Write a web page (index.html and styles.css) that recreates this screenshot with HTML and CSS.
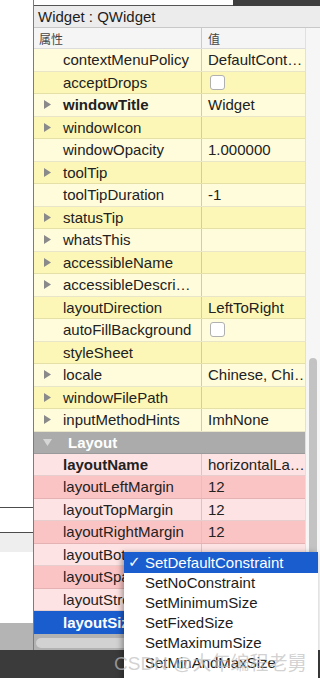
FILE: index.html
```html
<!DOCTYPE html>
<html lang="zh">

<head>
    <meta charset="UTF-8">
    <meta name="viewport" content="width=device-width, initial-scale=1.0">
    <title>Widget : QWidget</title>
    <link rel="stylesheet" href="styles.css">
</head>

<body>
    <div class="screen">
        <!-- left edge of the form editor -->
        <div class="side">
            <div class="side-top"></div>
            <div class="side-field"></div>
            <div class="side-band"></div>
            <div class="side-blank"></div>
            <div class="side-foot"></div>
        </div>

        <!-- Property editor -->
        <div class="panel">
            <div class="panel-top">
                <div class="filter"></div>
                <div class="dark"></div>
            </div>
            <div class="title">Widget : QWidget</div>

            <div class="body">
                <div class="table">
                    <div class="heads">
                        <div class="name">属性</div>
                        <div class="value">值</div>
                    </div>

                    <div class="row">
                        <div class="name"><span class="arrow"></span>contextMenuPolicy</div>
                        <div class="value">DefaultCont…</div>
                    </div>
                    <div class="row alt">
                        <div class="name"><span class="arrow"></span>acceptDrops</div>
                        <div class="value"><span class="check"></span></div>
                    </div>
                    <div class="row">
                        <div class="name bold"><span class="arrow"><svg width="7" height="9" viewBox="0 0 7 9"><polygon points="0,0 7,4.5 0,9" /></svg></span>windowTitle</div>
                        <div class="value">Widget</div>
                    </div>
                    <div class="row alt">
                        <div class="name"><span class="arrow"><svg width="7" height="9" viewBox="0 0 7 9"><polygon points="0,0 7,4.5 0,9" /></svg></span>windowIcon</div>
                        <div class="value"></div>
                    </div>
                    <div class="row">
                        <div class="name"><span class="arrow"></span>windowOpacity</div>
                        <div class="value">1.000000</div>
                    </div>
                    <div class="row alt">
                        <div class="name"><span class="arrow"><svg width="7" height="9" viewBox="0 0 7 9"><polygon points="0,0 7,4.5 0,9" /></svg></span>toolTip</div>
                        <div class="value"></div>
                    </div>
                    <div class="row">
                        <div class="name"><span class="arrow"></span>toolTipDuration</div>
                        <div class="value">-1</div>
                    </div>
                    <div class="row alt">
                        <div class="name"><span class="arrow"><svg width="7" height="9" viewBox="0 0 7 9"><polygon points="0,0 7,4.5 0,9" /></svg></span>statusTip</div>
                        <div class="value"></div>
                    </div>
                    <div class="row">
                        <div class="name"><span class="arrow"><svg width="7" height="9" viewBox="0 0 7 9"><polygon points="0,0 7,4.5 0,9" /></svg></span>whatsThis</div>
                        <div class="value"></div>
                    </div>
                    <div class="row alt">
                        <div class="name"><span class="arrow"><svg width="7" height="9" viewBox="0 0 7 9"><polygon points="0,0 7,4.5 0,9" /></svg></span>accessibleName</div>
                        <div class="value"></div>
                    </div>
                    <div class="row">
                        <div class="name"><span class="arrow"><svg width="7" height="9" viewBox="0 0 7 9"><polygon points="0,0 7,4.5 0,9" /></svg></span>accessibleDescri…</div>
                        <div class="value"></div>
                    </div>
                    <div class="row alt">
                        <div class="name"><span class="arrow"></span>layoutDirection</div>
                        <div class="value">LeftToRight</div>
                    </div>
                    <div class="row">
                        <div class="name"><span class="arrow"></span>autoFillBackground</div>
                        <div class="value"><span class="check"></span></div>
                    </div>
                    <div class="row alt">
                        <div class="name"><span class="arrow"></span>styleSheet</div>
                        <div class="value"></div>
                    </div>
                    <div class="row">
                        <div class="name"><span class="arrow"><svg width="7" height="9" viewBox="0 0 7 9"><polygon points="0,0 7,4.5 0,9" /></svg></span>locale</div>
                        <div class="value">Chinese, Chi…</div>
                    </div>
                    <div class="row alt">
                        <div class="name"><span class="arrow"><svg width="7" height="9" viewBox="0 0 7 9"><polygon points="0,0 7,4.5 0,9" /></svg></span>windowFilePath</div>
                        <div class="value"></div>
                    </div>
                    <div class="row">
                        <div class="name"><span class="arrow"><svg width="7" height="9" viewBox="0 0 7 9"><polygon points="0,0 7,4.5 0,9" /></svg></span>inputMethodHints</div>
                        <div class="value">ImhNone</div>
                    </div>

                    <!-- Layout group -->
                    <div class="group">
                        <span class="arrow"><svg width="9" height="7" viewBox="0 0 9 7"><polygon points="0,0 9,0 4.5,7" /></svg></span>Layout
                    </div>
                    <div class="row pink">
                        <div class="name bold"><span class="arrow"></span>layoutName</div>
                        <div class="value">horizontalLa…</div>
                    </div>
                    <div class="row pink alt">
                        <div class="name"><span class="arrow"></span>layoutLeftMargin</div>
                        <div class="value">12</div>
                    </div>
                    <div class="row pink">
                        <div class="name"><span class="arrow"></span>layoutTopMargin</div>
                        <div class="value">12</div>
                    </div>
                    <div class="row pink alt">
                        <div class="name"><span class="arrow"></span>layoutRightMargin</div>
                        <div class="value">12</div>
                    </div>

                    <!-- these rows sit under the open combo popup -->
                    <div class="row pink">
                        <div class="name"><span class="arrow"></span><span class="clip">layoutBottomMargin</span></div>
                        <div class="value"></div>
                    </div>
                    <div class="row pink alt">
                        <div class="name"><span class="arrow"></span><span class="clip">layoutSpacing</span></div>
                        <div class="value"></div>
                    </div>
                    <div class="row pink">
                        <div class="name"><span class="arrow"></span><span class="clip">layoutStretch</span></div>
                        <div class="value"></div>
                    </div>
                    <div class="row selected">
                        <div class="name bold"><span class="arrow"></span><span class="clip">layoutSizeConstraint</span></div>
                        <div class="value"></div>
                    </div>

                    <div class="hscroll"><div class="hthumb"></div></div>
                </div>

                <div class="vscroll"><div class="vthumb"></div></div>
            </div>
        </div>

        <div class="dock"></div>

        <!-- Combo popup -->
        <div class="menu">
            <div class="item active"><span class="tick">✓</span>SetDefaultConstraint</div>
            <div class="item">SetNoConstraint</div>
            <div class="item">SetMinimumSize</div>
            <div class="item">SetFixedSize</div>
            <div class="item">SetMaximumSize</div>
            <div class="item">SetMinAndMaxSize</div>
        </div>

        <div class="watermark">CSDN @大年编程老舅</div>
    </div>
</body>

</html>
```

FILE: styles.css
```css
* {
    box-sizing: border-box;
}

body {
    margin: 0;
    width: 320px;
    height: 678px;
    overflow: hidden;
    background: #fff;
    font-family: "Liberation Sans", Arial, sans-serif;
    color: #222;
}

.screen {
    position: relative;
    display: grid;
    grid-template-columns: 34px 286px;
    grid-template-rows: 650px 28px;
    height: 678px;
}

/* Left strip */
.side {
    display: flex;
    flex-direction: column;
    border-right: 1px solid #7c7c7c;
}

.side-top {
    height: 507px;
}

.side-field {
    height: 26px;
    border-top: 1px solid #4c4c4c;
    border-bottom: 1px solid #4c4c4c;
}

.side-band {
    height: 19px;
    background: #eeeeee;
}

.side-blank {
    height: 71px;
}

.side-foot {
    flex: 1;
    background: #b4b4b4;
}

/* Panel */
.panel {
    display: flex;
    flex-direction: column;
    overflow: hidden;
}

.panel-top {
    height: 6px;
    display: flex;
}

.panel-top .filter {
    width: 199px;
    background: #fff;
    border-bottom: 1px solid #555;
}

.panel-top .dark {
    flex: 1;
    background: #3e3e3e;
}

.title {
    height: 22px;
    padding-left: 4px;
    background: #ececec;
    border-bottom: 1px solid #c8c8c8;
    font-size: 15px;
    line-height: 21px;
    color: #1e1e1e;
}

.body {
    flex: 1;
    display: flex;
}

.table {
    width: 271px;
    display: flex;
    flex-direction: column;
}

.heads {
    height: 21px;
    flex: none;
    display: flex;
    background: #f5f5f5;
    border-bottom: 1px solid #dcdcdc;
    font-family: "Noto Sans CJK SC", sans-serif;
    font-size: 12px;
    color: #444;
}

.heads .name {
    padding-left: 5px;
}

.name {
    width: 168px;
    flex: none;
    display: flex;
    align-items: center;
    padding-left: 10px;
    border-right: 1px solid #cacaca;
    white-space: nowrap;
    overflow: hidden;
}

.clip {
    width: 61px;
    overflow: hidden;
}

.value {
    flex: 1;
    display: flex;
    align-items: center;
    padding-left: 6px;
    white-space: nowrap;
    overflow: hidden;
}

.row {
    height: 22.5px;
    flex: none;
    display: flex;
    font-size: 15px;
    background: #fffcdc;
    border-bottom: 1px solid rgba(0, 0, 0, 0.09);
}

.row.alt {
    background: #fcf7b6;
}

.bold {
    font-weight: bold;
}

.arrow {
    width: 19px;
    flex: none;
    display: flex;
    align-items: center;
}

.arrow polygon {
    fill: #8a8a8a;
}

.check {
    width: 15px;
    height: 15px;
    margin-left: 2px;
    background: #fff;
    border: 1px solid #b0b0b0;
    border-radius: 3px;
}

/* Layout group */
.group {
    height: 22px;
    flex: none;
    display: flex;
    align-items: center;
    padding-left: 9px;
    background: #ababab;
    color: #fff;
    font-size: 15px;
    font-weight: bold;
    border-bottom: 1px solid #9a9a9a;
}

.group .arrow {
    width: 25px;
}

.group .arrow polygon {
    fill: #d6d6d6;
}

.row.pink {
    background: #fde3e3;
}

.row.pink.alt {
    background: #fbc4c4;
}

.row.selected {
    background: #1a5dcf;
    color: #fff;
    border-bottom: none;
}

.row.selected .name {
    border-right-color: #1a5dcf;
}

/* Scrollbars */
.hscroll {
    flex: 1;
    background: #b2b2b2;
    padding: 4px 0 0 2px;
}

.hthumb {
    width: 230px;
    height: 10px;
    border-radius: 5px;
    background: #d2d2d2;
}

.vscroll {
    width: 15px;
    background: #f6f6f6;
    border-left: 1px solid #e0e0e0;
    padding: 330px 0 0 3px;
}

.vthumb {
    width: 8px;
    height: 272px;
    border-radius: 4px;
    background: #c3c3c3;
}

.dock {
    grid-column: 1 / 3;
    background: #3b3b3b;
}

/* Popup */
.menu {
    position: absolute;
    left: 124px;
    top: 552px;
    width: 194px;
    height: 130px;
    background: #fff;
    box-shadow: -2px 1px 6px rgba(0, 0, 0, 0.35);
}

.item {
    height: 20px;
    padding-left: 21px;
    font-size: 15px;
    line-height: 20px;
    color: #1c1c1c;
    position: relative;
}

.item.active {
    height: 21px;
    line-height: 21px;
    background: #1a5dcf;
    color: #fff;
}

.tick {
    position: absolute;
    left: 4px;
    font-family: "DejaVu Sans", sans-serif;
    font-size: 15px;
}

.watermark {
    position: absolute;
    left: 114px;
    top: 648px;
    font-family: "Liberation Sans", "Noto Sans CJK SC", sans-serif;
    font-size: 19px;
    color: rgba(190, 190, 190, 0.7);
    white-space: nowrap;
}
```
